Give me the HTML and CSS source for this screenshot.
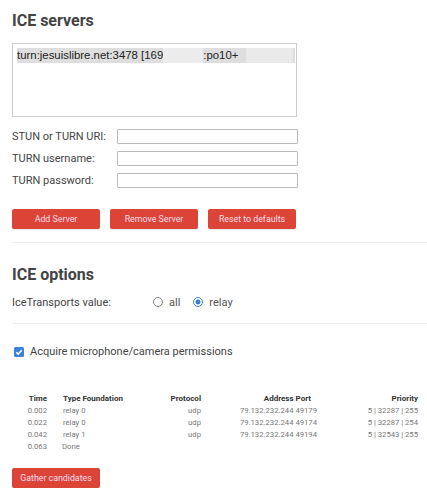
FILE: index.html
```html
<!DOCTYPE html>
<html>
<head>
<meta charset="utf-8">
<link rel="stylesheet" href="styles.css">
</head>
<body>
<section class="servers">
  <h2 class="title">ICE servers</h2>
  <div class="listbox">
    <div class="option"><span>turn:jesuislibre.net:3478 [169</span><span class="blur b1"></span><span>:po10+</span><span class="blur b2"></span></div>
  </div>
  <div class="fields">
    <label class="lbl">STUN or TURN URI:</label><span class="input"></span>
    <label class="lbl">TURN username:</label><span class="input"></span>
    <label class="lbl">TURN password:</label><span class="input"></span>
  </div>
  <div class="buttons">
    <button class="btn">Add Server</button>
    <button class="btn">Remove Server</button>
    <button class="btn">Reset to defaults</button>
  </div>
</section>
<hr class="rule">
<section class="options">
  <h2 class="title">ICE options</h2>
  <div class="transports">
    <span class="tlabel">IceTransports value:</span>
    <span class="radio"><span class="dot"></span>all</span>
    <span class="radio"><span class="dot on"></span>relay</span>
  </div>
</section>
<hr class="rule">
<div class="perm"><span class="check"><svg viewBox="0 0 10 10" width="10" height="10"><rect x="0" y="0" width="10" height="10" rx="1.5" fill="#3b82d6"/><path d="M2.3 5.2 L4.2 7.1 L7.8 3.2" fill="none" stroke="#fff" stroke-width="1.5"/></svg></span>Acquire microphone/camera permissions</div>
<table class="cands">
  <thead>
    <tr><th class="c-time">Time</th><th class="c-type">Type Foundation</th><th class="c-proto">Protocol</th><th class="c-addr"><span class="addr-h">Address Port</span></th><th class="c-prio">Priority</th></tr>
  </thead>
  <tbody>
    <tr><td class="c-time">0.002</td><td class="c-type">relay 0</td><td class="c-proto">udp</td><td class="c-addr">79.132.232.244 49179</td><td class="c-prio">5 | 32287 | 255</td></tr>
    <tr><td class="c-time">0.022</td><td class="c-type">relay 0</td><td class="c-proto">udp</td><td class="c-addr">79.132.232.244 49174</td><td class="c-prio">5 | 32287 | 254</td></tr>
    <tr><td class="c-time">0.042</td><td class="c-type">relay 1</td><td class="c-proto">udp</td><td class="c-addr">79.132.232.244 49194</td><td class="c-prio">5 | 32543 | 255</td></tr>
    <tr><td class="c-time">0.063</td><td class="c-done">Done</td><td></td><td></td><td></td></tr>
  </tbody>
</table>
<button class="btn gather">Gather candidates</button>
</body>
</html>
```
FILE: styles.css
```css
html, body { margin: 0; padding: 0; background: #fff; }
body {
  font-family: Roboto, "Liberation Sans", sans-serif;
  color: #444;
  font-size: 11px;
  padding: 0 0 0 12px;
  width: 415px;
}
.title {
  font-size: 16px;
  font-weight: 700;
  margin: 0;
  line-height: 22px;
  color: #444;
}
.servers { padding-top: 10px; }
.servers .title { margin-bottom: 11px; }
.listbox {
  width: 283px;
  height: 72px;
  border: 1px solid #ccc;
  padding: 0;
  box-sizing: content-box;
  overflow: hidden;
}
.option {
  margin: 4px 1px 0 4px;
  background: #dedede;
  height: 15px;
  line-height: 15px;
  font-family: "Liberation Sans", Arial, sans-serif;
  font-size: 11.4px;
  color: #222;
  display: flex;
  white-space: nowrap;
  overflow: hidden;
}
.blur { display: inline-block; height: 15px; background: #ececec; flex: none; }
.b1 { width: 40px; }
.b2 { width: 47px; margin-left: 8px; background: #eaeaea; }
.fields {
  display: grid;
  grid-template-columns: 105px 181px;
  row-gap: 7px;
  margin-top: 12px;
  align-items: center;
}
.lbl { line-height: 15px; }
.input {
  display: block;
  height: 13px;
  border: 1px solid #bbb;
  border-radius: 1px;
}
.buttons {
  display: flex;
  gap: 10px;
  margin-top: 21px;
}
.btn {
  width: 88px;
  height: 20px;
  border: none;
  border-radius: 2px;
  background: #db4437;
  color: #fde;
  font-family: Roboto, "Liberation Sans", sans-serif;
  font-size: 8.8px;
  padding: 0;
  box-shadow: 0 1px 1px rgba(0,0,0,0.1);
}
.rule {
  border: none;
  border-top: 1px solid #eee;
  margin: 0;
}
.servers + .rule { margin-top: 13px; }
.options { padding-top: 21px; }
.options .title { margin-bottom: 8px; }
.transports {
  display: flex;
  align-items: center;
  height: 16px;
}
.tlabel { width: 141px; }
.radio { display: inline-flex; align-items: center; margin-right: 13px; color: #555; }
.dot {
  width: 8px; height: 8px;
  border: 1px solid #888;
  border-radius: 50%;
  margin-right: 6px;
  box-sizing: content-box;
}
.dot.on {
  border-color: #3b82d6;
  background: radial-gradient(circle, #3b82d6 0 2.2px, #fff 2.8px);
}
.options + .rule { margin-top: 13px; }
.perm {
  display: flex;
  align-items: center;
  margin-top: 21px;
  margin-left: 2px;
}
.check { display: inline-flex; margin-right: 6px; }
.cands {
  border-collapse: collapse;
  margin-top: 35px;
  font-size: 8px;
  width: 406px;
  table-layout: fixed;
}
.cands th, .cands td { padding: 0; height: 12px; line-height: 12px; white-space: nowrap; }
.cands th { font-weight: 700; color: #333; }
.cands td { color: #777; font-size: 7.7px; }
.c-time { text-align: right; width: 35px; }
.c-type { text-align: left; padding-left: 16px !important; width: 70px; }
.c-done { text-align: left; padding-left: 15px !important; }
.c-proto { text-align: right; width: 68px; }
.c-addr { text-align: right; width: 116px; }
.addr-h { margin-right: 6px; }
.c-prio { text-align: right; }
.gather { display: block; margin-top: 15px; }
```
